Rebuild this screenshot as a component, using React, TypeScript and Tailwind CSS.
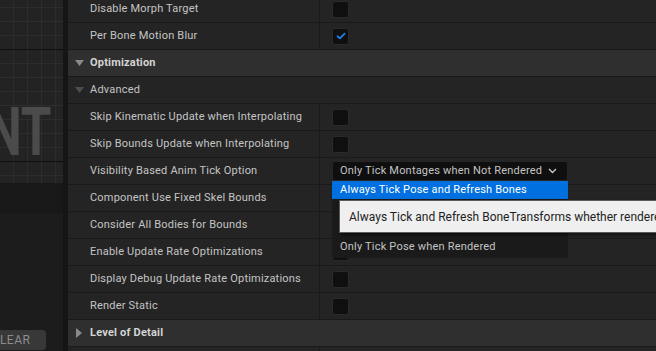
import React from "react";

const font = { fontFamily: "Roboto, 'Noto Sans', sans-serif" };

type Row =
  | { kind: "prop"; label: string; value: "check" | "checked" | "combo" }
  | { kind: "header"; label: string; open: boolean; dim?: boolean; sub?: boolean };

const rows: Row[] = [
  { kind: "prop", label: "Disable Morph Target", value: "check" },
  { kind: "prop", label: "Per Bone Motion Blur", value: "checked" },
  { kind: "header", label: "Optimization", open: true },
  { kind: "header", label: "Advanced", open: true, dim: true, sub: true },
  { kind: "prop", label: "Skip Kinematic Update when Interpolating", value: "check" },
  { kind: "prop", label: "Skip Bounds Update when Interpolating", value: "check" },
  { kind: "prop", label: "Visibility Based Anim Tick Option", value: "combo" },
  { kind: "prop", label: "Component Use Fixed Skel Bounds", value: "check" },
  { kind: "prop", label: "Consider All Bodies for Bounds", value: "check" },
  { kind: "prop", label: "Enable Update Rate Optimizations", value: "check" },
  { kind: "prop", label: "Display Debug Update Rate Optimizations", value: "check" },
  { kind: "prop", label: "Render Static", value: "check" },
  { kind: "header", label: "Level of Detail", open: false },
  { kind: "prop", label: "", value: "check" },
];

function Checkbox({ checked }: { checked?: boolean }) {
  return (
    <div className="w-[17px] h-[17px] rounded-[3px] bg-[#0f0f0f] border border-[#2a2a2a] flex items-center justify-center">
      {checked && (
        <svg width="10" height="8" viewBox="0 0 10 8">
          <path d="M1.5 4.3 L3.9 6.4 L8.6 1.6" fill="none" stroke="#1f7ff0" strokeWidth="1.8" strokeLinecap="round" strokeLinejoin="round" />
        </svg>
      )}
    </div>
  );
}

function Combo() {
  return (
    <div className="relative">
      <div className="w-[236px] h-[20px] rounded-[3px] bg-[#0f0f0f] border border-[#262626] flex items-center pl-[7px] pr-[10px] text-[11px] tracking-[0.2px] text-[#c4c4c4]">
        <span className="flex-1">Only Tick Montages when Not Rendered</span>
        <svg width="9" height="6" viewBox="0 0 9 6">
          <path d="M1 1 L4.5 4.5 L8 1" fill="none" stroke="#c4c4c4" strokeWidth="1.4" />
        </svg>
      </div>
      <div className="absolute left-0 top-[20px] w-[236px] h-[77px] bg-[#1a1a1a] rounded-b-[3px] flex flex-col text-[11px] tracking-[0.2px] text-[#c4c4c4] z-10">
        <div className="h-[18px] bg-[#0070e0] text-white flex items-center pl-[8px]">Always Tick Pose and Refresh Bones</div>
        <div className="h-[38px]" />
        <div className="h-[21px] flex items-center pl-[8px]">Only Tick Pose when Rendered</div>
      </div>
      <div className="absolute left-[7px] top-[39px] w-[330px] h-[33px] bg-[#efefef] border border-[#5a5a5a] shadow-[2px_2px_4px_rgba(0,0,0,0.6)] flex items-center pl-[9px] text-[12px] text-[#1e1e1e] whitespace-nowrap z-20">
        Always Tick and Refresh BoneTransforms whether rendered or not.
      </div>
    </div>
  );
}

function Arrow({ open, dim }: { open: boolean; dim?: boolean }) {
  const c = dim ? "#4e4e4e" : "#8a8a8a";
  return open ? (
    <svg width="9" height="6" viewBox="0 0 9 6">
      <path d="M0 0 H9 L4.5 6 Z" fill={c} />
    </svg>
  ) : (
    <svg width="6" height="10" viewBox="0 0 6 10">
      <path d="M0 0 L6 5 L0 10 Z" fill={c} />
    </svg>
  );
}

export default function App() {
  return (
    <div className="w-[656px] h-[351px] flex overflow-hidden bg-[#1c1c1c]" style={font}>
      {/* viewport side */}
      <div className="w-[63px] flex flex-col">
        <div className="h-[183px] flex flex-col bg-[#232323] bg-[linear-gradient(to_right,#2d2d2d_1px,transparent_1px),linear-gradient(to_bottom,#2d2d2d_1px,transparent_1px)] bg-[size:14px_14px] bg-[position:13px_7px]">
          <div className="h-[50px] border-b border-[#0e0e0e]" />
          <div className="h-[112px] border-b border-[#0e0e0e] overflow-hidden flex justify-end pr-[11px] pt-[50px]">
            <span className="inline-block origin-right scale-x-75 text-[66px] font-bold leading-none text-[#4b4b4b] whitespace-nowrap">NT</span>
          </div>
        </div>
        <div className="h-[30px] bg-[#181818]" />
        <div className="flex-1 flex flex-col justify-end pb-[1px] overflow-hidden">
          <div className="w-[46px] h-[20px] overflow-hidden rounded-r-[3px]">
            <div className="w-[70px] h-[20px] -ml-[24px] bg-[#383838] rounded-[3px] flex items-center justify-center text-[12px] text-[#8c8c8c] tracking-[0.5px]">
              CLEAR
            </div>
          </div>
        </div>
      </div>
      <div className="w-[5px] bg-[#151515]" />
      {/* details */}
      <div className="flex-1 flex flex-col -mt-[4px]">
        {rows.map((r, i) =>
          r.kind === "header" ? (
            <div
              key={i}
              className={`h-[27px] shrink-0 border-b border-[#1a1a1a] flex items-center ${r.sub ? "bg-[#242424]" : "bg-[#2f2f2f]"}`}
            >
              <div className="w-[22px] flex justify-center">
                <Arrow open={r.open} dim={r.dim} />
              </div>
              <span className={`text-[11px] tracking-[0.2px] ${r.sub ? "text-[#c4c4c4]" : "font-bold text-[#d4d4d4]"}`}>{r.label}</span>
            </div>
          ) : (
            <div key={i} className={`h-[27px] shrink-0 border-b border-[#1a1a1a] bg-[#242424] flex ${r.value === "combo" ? "relative z-10" : ""}`}>
              <div className="w-[252px] pl-[22px] flex items-center text-[11px] tracking-[0.2px] text-[#c4c4c4] border-r border-[#1a1a1a] whitespace-nowrap">
                {r.label}
              </div>
              <div className="flex-1 flex items-center pl-[12px]">
                {r.value === "combo" ? <Combo /> : <Checkbox checked={r.value === "checked"} />}
              </div>
            </div>
          )
        )}
      </div>
    </div>
  );
}
